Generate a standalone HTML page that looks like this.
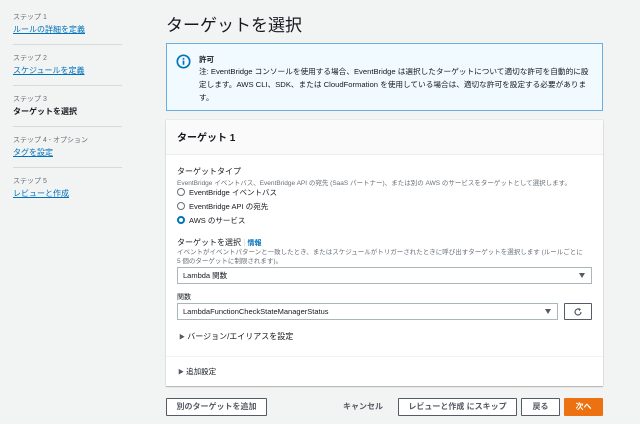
<!DOCTYPE html>
<html><head><meta charset="utf-8"><style>
*{box-sizing:border-box;margin:0;padding:0}
body{width:640px;height:424px;background:#f2f3f3;font-family:"Liberation Sans","Noto Sans CJK JP",sans-serif;color:#16191f;position:relative;overflow:hidden;font-size:8px}
.a{position:absolute}
.sl{color:#687078;font-size:7px}
.lk{color:#0073bb;font-size:8px;text-decoration:underline}
.hr{position:absolute;left:13px;width:109px;height:1px;background:#d5dbdb}
.radio{display:inline-block;width:8px;height:8px;border:1px solid #687078;border-radius:50%;vertical-align:-1px;margin-right:4px}
.btn{position:absolute;height:18px;border:1px solid #545b64;background:#fff;font-size:8px;font-weight:bold;color:#545b64;text-align:center;line-height:16px;border-radius:1px}
.sel{position:absolute;height:17px;border:1px solid #aab7b8;background:#fff;font-size:7.5px;line-height:15px;padding-left:5px}
.tri{position:absolute;right:6px;top:5px;width:0;height:0;border-left:3.5px solid transparent;border-right:3.5px solid transparent;border-top:5px solid #545b64}
</style></head><body>
<div class="a sl" style="left:13px;top:12px">ステップ 1</div>
<div class="a lk" style="left:13px;top:24px">ルールの詳細を定義</div>
<div class="hr" style="top:44px"></div>
<div class="a sl" style="left:13px;top:53px">ステップ 2</div>
<div class="a lk" style="left:13px;top:65px">スケジュールを定義</div>
<div class="hr" style="top:85px"></div>
<div class="a sl" style="left:13px;top:94px">ステップ 3</div>
<div class="a" style="left:13px;top:106px;font-weight:bold">ターゲットを選択</div>
<div class="hr" style="top:126px"></div>
<div class="a sl" style="left:13px;top:135px">ステップ 4 - オプション</div>
<div class="a lk" style="left:13px;top:147px">タグを設定</div>
<div class="hr" style="top:167px"></div>
<div class="a sl" style="left:13px;top:176px">ステップ 5</div>
<div class="a lk" style="left:13px;top:188px">レビューと作成</div>

<div class="a" style="left:166px;top:11px;font-size:17px">ターゲットを選択</div>

<div class="a" style="left:166px;top:43px;width:437px;height:68px;background:#f1faff;border:1px solid #6aaee0"></div>
<svg class="a" style="left:176px;top:54px" width="15" height="15" viewBox="0 0 16 16"><circle cx="8" cy="8" r="6.6" fill="none" stroke="#0073bb" stroke-width="1.8"/><rect x="7.1" y="7" width="1.8" height="4.5" fill="#0073bb"/><rect x="7.1" y="4.2" width="1.8" height="1.8" fill="#0073bb"/></svg>
<div class="a" style="left:199px;top:54px;font-size:7.5px;font-weight:bold">許可</div>
<div class="a" style="left:199px;top:65px;font-size:7.65px;line-height:13px;color:#16191f;white-space:nowrap">注: EventBridge コンソールを使用する場合、EventBridge は選択したターゲットについて適切な許可を自動的に設<br>定します。AWS CLI、SDK、または CloudFormation を使用している場合は、適切な許可を設定する必要がありま<br>す。</div>

<div class="a" style="left:166px;top:120px;width:437px;height:266px;background:#fff;box-shadow:0 1px 1px rgba(0,0,0,.25),0 0 1px rgba(0,0,0,.2)"></div>
<div class="a" style="left:166px;top:120px;width:437px;height:35px;background:#fafafa;border-bottom:1px solid #eaeded"></div>
<div class="a" style="left:177px;top:129px;font-size:10px;font-weight:bold">ターゲット 1</div>

<div class="a" style="left:177px;top:166px;font-size:8px">ターゲットタイプ</div>
<div class="a" style="left:177px;top:177px;font-size:6.5px;color:#687078;white-space:nowrap">EventBridge イベントバス、EventBridge API の宛先 (SaaS パートナー)、または別の AWS のサービスをターゲットとして選択します。</div>
<div class="a" style="left:177px;top:187px;font-size:7.5px"><span class="radio"></span>EventBridge イベントバス</div>
<div class="a" style="left:177px;top:201px;font-size:7.5px"><span class="radio"></span>EventBridge API の宛先</div>
<div class="a" style="left:177px;top:215px;font-size:7.5px"><span class="radio" style="border:2.5px solid #0073bb"></span>AWS のサービス</div>

<div class="a" style="left:177px;top:237px;font-size:8px">ターゲットを選択 <span style="color:#d5dbdb">|</span> <span style="color:#0073bb;font-weight:bold;font-size:7px">情報</span></div>
<div class="a" style="left:177px;top:248px;width:415px;font-size:6.5px;line-height:9px;color:#687078">イベントがイベントパターンと一致したとき、またはスケジュールがトリガーされたときに呼び出すターゲットを選択します (ルールごとに<br>5 個のターゲットに制限されます)。</div>
<div class="sel" style="left:177px;top:267px;width:415px">Lambda 関数<div class="tri"></div></div>

<div class="a" style="left:177px;top:292px;font-size:7px">関数</div>
<div class="sel" style="left:177px;top:303px;width:381px">LambdaFunctionCheckStateManagerStatus<div class="tri"></div></div>
<div class="a" style="left:564px;top:303px;width:28px;height:17px;border:1px solid #545b64;background:#fff;border-radius:1px"></div>
<svg class="a" style="left:573px;top:307px" width="10" height="10" viewBox="0 0 10 10"><path d="M8 5A3 3 0 1 1 6.5 2.4" fill="none" stroke="#545b64" stroke-width="1.2"/><path d="M5.5 0.8L8 2.2 6.2 4.2Z" fill="#545b64"/></svg>

<div class="a" style="left:179px;top:331px;font-size:8px;color:#545b64"><span style="font-size:6px">▶</span> <span style="color:#16191f">バージョン/エイリアスを設定</span></div>
<div class="a" style="left:166px;top:356px;width:437px;height:1px;background:#f2f3f3"></div>
<div class="a" style="left:178px;top:366px;font-size:7.5px;color:#545b64"><span style="font-size:6px">▶</span> <span style="color:#16191f">追加設定</span></div>

<div class="btn" style="left:166px;top:398px;width:101px">別のターゲットを追加</div>
<div class="a" style="left:343px;top:401px;font-size:8px;font-weight:bold;color:#545b64">キャンセル</div>
<div class="btn" style="left:398px;top:398px;width:119px">レビューと作成 にスキップ</div>
<div class="btn" style="left:521px;top:398px;width:39px">戻る</div>
<div class="btn" style="left:564px;top:398px;width:39px;background:#ec7211;border-color:#ec7211;color:#fff">次へ</div>
</body></html>
